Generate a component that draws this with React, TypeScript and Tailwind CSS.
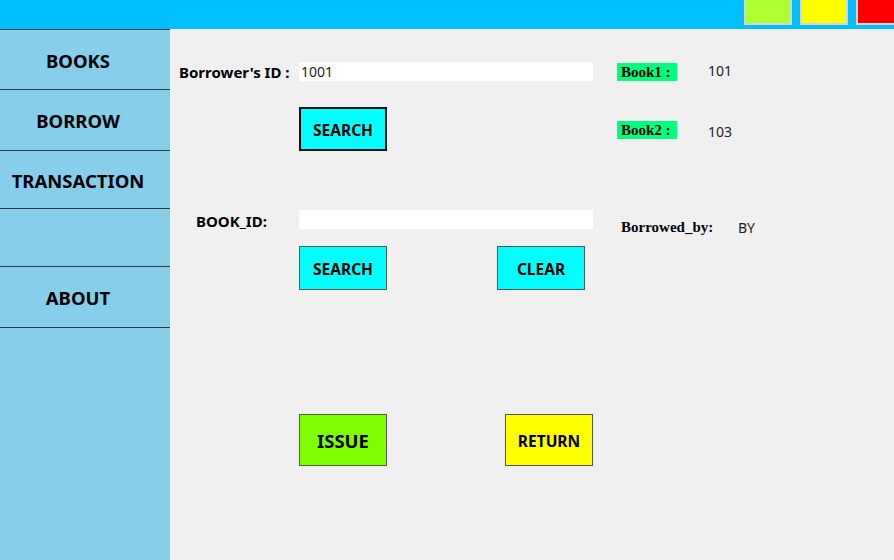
import React from 'react';

const sans = "font-['Noto_Sans',_'Open_Sans',_sans-serif]";
const serif = "font-['Liberation_Serif',_'Times_New_Roman',_serif]";

function NavItem({ label, h }: { label?: string; h: string }) {
  return (
    <div className={`${h} flex items-center border-b border-[#2b3a44] text-[18.5px] font-bold text-black`}>
      <span className="w-[156px] text-center pt-[2px]">{label}</span>
    </div>
  );
}

export default function App() {
  return (
    <div className={`w-[894px] h-[560px] flex flex-col overflow-hidden bg-[#f0f0f0] ${sans}`}>
      {/* Title bar */}
      <div className="h-[29px] flex-shrink-0 bg-[#00bfff] flex justify-end items-start gap-[8px]">
        <div className="w-[48px] h-[25px] bg-[#adff2f] border-2 border-t-0 border-[#d4d4d4]" />
        <div className="w-[48px] h-[25px] bg-[#ffff00] border-2 border-t-0 border-[#d4d4d4]" />
        <div className="w-[38px] h-[25px] bg-[#ff0000] border-2 border-t-0 border-r-0 border-[#d4d4d4]" />
      </div>

      <div className="flex flex-1 min-h-0">
        {/* Sidebar */}
        <div className="w-[170px] flex-shrink-0 bg-[#87ceeb] border-t border-[#2b3a44]">
          <NavItem label="BOOKS" h="h-[60px]" />
          <NavItem label="BORROW" h="h-[61px]" />
          <NavItem label="TRANSACTION" h="h-[58px]" />
          <NavItem h="h-[58px]" />
          <NavItem label="ABOUT" h="h-[61px]" />
        </div>

        {/* Form area */}
        <div className="flex-1 flex">
          <div className="w-[430px] flex flex-col">
            <div className="mt-[33px] flex items-center h-[19px]">
              <div className="w-[129px] pl-[9px] pt-[2px] text-[15px] font-bold text-black whitespace-nowrap">Borrower's ID :</div>
              <div className="w-[294px] h-[19px] bg-white flex items-center pl-[2px] text-[14px] text-[#222]">1001</div>
            </div>
            <div className="mt-[26px] ml-[129px]">
              <button className="w-[88px] h-[44px] pt-[3px] bg-[#00ffff] border-2 border-[#111] text-[15.5px] font-bold text-black">SEARCH</button>
            </div>
            <div className="mt-[59px] flex items-center h-[19px]">
              <div className="w-[129px] pl-[26px] pt-[3px] text-[15px] font-bold text-black whitespace-nowrap">BOOK_ID:</div>
              <div className="w-[294px] h-[19px] bg-white" />
            </div>
            <div className="mt-[17px] ml-[129px] flex gap-[110px]">
              <button className="w-[88px] h-[44px] pt-[3px] bg-[#00ffff] border border-[#555] text-[15.5px] font-bold text-black">SEARCH</button>
              <button className="w-[88px] h-[44px] pt-[3px] bg-[#00ffff] border border-[#555] text-[15.5px] font-bold text-black">CLEAR</button>
            </div>
            <div className="mt-[124px] ml-[129px] flex gap-[118px]">
              <button className="w-[88px] h-[52px] pt-[2px] bg-[#7fff00] border border-[#555] text-[18.5px] font-bold text-black">ISSUE</button>
              <button className="w-[88px] h-[52px] pt-[3px] bg-[#ffff00] border border-[#555] text-[15.5px] font-bold text-black">RETURN</button>
            </div>
          </div>

          {/* Right info column */}
          <div className="flex-1 flex flex-col">
            <div className="mt-[34px] ml-[17px] flex items-center">
              <div className={`w-[60px] h-[18px] bg-[#00ff7f] pl-[4px] flex items-center text-[15px] font-bold text-black ${serif}`}>Book1 :</div>
              <div className="ml-[31px] text-[14px] text-[#222] -mt-[4px]">101</div>
            </div>
            <div className="mt-[37px] ml-[17px] flex items-center">
              <div className={`w-[60px] h-[18px] bg-[#00ff7f] pl-[4px] flex items-center text-[15px] font-bold text-black ${serif}`}>Book2 :</div>
              <div className="ml-[31px] text-[14px] text-[#222] mt-[3px]">103</div>
            </div>
            <div className="mt-[74px] ml-[21px] flex items-center">
              <div className={`w-[117px] text-[15px] font-bold text-black ${serif}`}>Borrowed_by:</div>
              <div className="text-[14px] text-[#222]">BY</div>
            </div>
          </div>
        </div>
      </div>
    </div>
  );
}
